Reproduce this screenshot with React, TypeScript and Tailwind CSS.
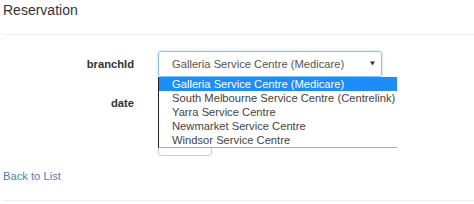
import React from 'react';

const branches = [
  'Galleria Service Centre (Medicare)',
  'South Melbourne Service Centre (Centrelink)',
  'Yarra Service Centre',
  'Newmarket Service Centre',
  'Windsor Service Centre',
];

export default function App() {
  return (
    <div className="min-h-screen bg-white pl-[3px] font-['Liberation_Sans',Arial,sans-serif] text-[#333]">
      <div className="h-[35px] border-b border-[#eeeeee]">
        <h2 className="text-[14px] leading-[20px] text-[#333]">Reservation</h2>
      </div>

      <div className="mt-[16px]">
        <div className="flex items-center">
          <label className="w-[131px] text-right text-[11.2px] font-bold leading-[26px]">branchId</label>
          <div className="relative ml-[24px] h-[26px] w-[224px]">
            <div className="flex h-full items-center justify-between rounded-[3px] border border-[#8fc1ea] pl-[13px] pr-[6px] text-[11.2px] text-[#555] shadow-[0_0_3px_rgba(102,175,233,0.5)]">
              <span>Galleria Service Centre (Medicare)</span>
              <svg width="5" height="5" viewBox="0 0 5 5" className="mb-[1px]">
                <path d="M0 0.5 L5 0.5 L2.5 4.5 Z" fill="#333" />
              </svg>
            </div>
            {/* open dropdown list */}
            <ul className="absolute left-0 top-[26px] z-10 w-[239px] border-b border-l border-b-[#a9a9a9] border-l-[#222] bg-white text-[11.2px] leading-[14px]">
              {branches.map((b, i) => (
                <li
                  key={b}
                  className={
                    i === 0
                      ? 'h-[14px] bg-[#1e8cfb] pl-[13px] text-white'
                      : 'h-[14px] pl-[13px] text-[#444]'
                  }
                >
                  {b}
                </li>
              ))}
            </ul>
          </div>
        </div>

        <div className="mt-[13px] flex items-start">
          <label className="w-[131px] text-right text-[11.2px] font-bold leading-[26px]">date</label>
          <div className="ml-[24px] h-[66px] w-[54px] rounded-[3px] border border-[#cccccc]" />
        </div>
      </div>

      <div className="mt-[7px] h-[38px] border-b border-[#eeeeee]">
        <a href="#" className="text-[11.2px] leading-[20px] text-[#4a7fb5]">Back to List</a>
      </div>
    </div>
  );
}
